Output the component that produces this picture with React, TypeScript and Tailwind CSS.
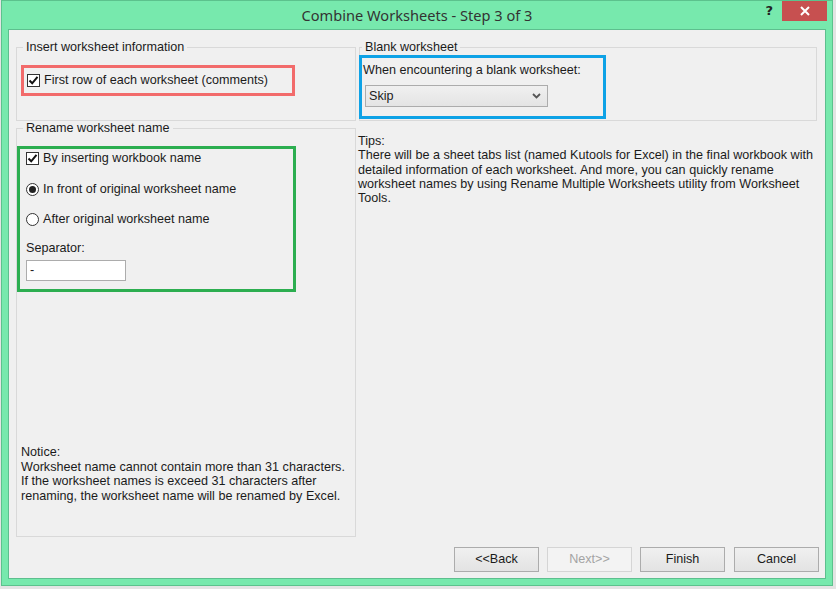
import React from "react";

const ui = "font-['Liberation_Sans',Arial,sans-serif] text-[12.6px] leading-[15px] text-[#1b1b1b]";

function CheckBox({ checked }: { checked?: boolean }) {
  return (
    <span className="flex h-[13px] w-[13px] shrink-0 items-center justify-center border border-[#333] bg-white">
      {checked && (
        <svg width="11" height="11" viewBox="0 0 11 11">
          <path d="M1.5 5.5 L4.2 8.3 L9.5 1.8" fill="none" stroke="#111" strokeWidth="2" />
        </svg>
      )}
    </span>
  );
}

function Radio({ checked }: { checked?: boolean }) {
  return (
    <span className="flex h-[13px] w-[13px] shrink-0 items-center justify-center rounded-full border border-[#333] bg-white">
      {checked && <span className="h-[7px] w-[7px] rounded-full bg-[#222]" />}
    </span>
  );
}

function GroupBox({
  title,
  className,
  legendClass,
  children,
}: {
  title: string;
  className?: string;
  legendClass?: string;
  children?: React.ReactNode;
}) {
  return (
    <fieldset className={`border border-[#d9d9d9] ${className ?? ""}`}>
      <legend className={`px-[3px] ${legendClass ?? "ml-[6px]"}`}>{title}</legend>
      {children}
    </fieldset>
  );
}

function DlgButton({ label, disabled }: { label: string; disabled?: boolean }) {
  return (
    <button
      type="button"
      className={`flex h-[25px] w-[85px] items-center justify-center border ${
        disabled
          ? "border-[#d5d5d5] bg-[#f3f3f3] text-[#a3a3a3]"
          : "border-[#acacac] bg-gradient-to-b from-[#f0f0f0] to-[#e3e3e3] text-[#1b1b1b]"
      }`}
    >
      {label}
    </button>
  );
}

export default function App() {
  return (
    <div className="h-[589px] w-[836px] overflow-hidden bg-[#e4e4e4]">
      <div className="ml-[1px] flex h-[586px] w-[832px] flex-col border border-[#5cc28d] bg-[#77e9ad]">
        {/* title bar */}
        <div className="grid h-[28px] grid-cols-[1fr_auto_1fr]">
          <div />
          <div className="pt-[4px] font-['Noto_Sans',sans-serif] text-[14.6px] leading-[20px] text-[#333]">
            Combine Worksheets - Step 3 of 3
          </div>
          <div className="flex items-start justify-end">
            <span className="mr-[9px] mt-[2px] font-['DejaVu_Sans',sans-serif] text-[13px] font-bold leading-[16px] text-[#222]">
              ?
            </span>
            <button
              type="button"
              className="mr-[5px] flex h-[20px] w-[45px] items-center justify-center bg-[#c75050]"
            >
              <svg width="10" height="10" viewBox="0 0 10 10">
                <path d="M1 1 L9 9 M9 1 L1 9" stroke="#fff" strokeWidth="2" />
              </svg>
            </button>
          </div>
        </div>

        {/* client area */}
        <div className={`mx-[6px] mb-[6px] flex flex-1 flex-col border border-[#5dbf8e] bg-[#f0f0f0] pl-[7px] pt-[10px] ${ui}`}>
          <div className="flex">
            <GroupBox title="Insert worksheet information" className="h-[81px] w-[340px]">
              <div className="ml-[4px] mt-[10px] flex h-[31px] w-[274px] items-center gap-[4px] border-[3px] border-[#f26b6b] pl-[3px]">
                <CheckBox checked />
                <span>First row of each worksheet (comments)</span>
              </div>
            </GroupBox>
            <GroupBox
              title="Blank worksheet"
              className="ml-[3px] h-[81px] w-[458px]"
              legendClass="ml-[2px]"
            >
              <div className="-ml-[1px] h-[64px] w-[247px] border-[3px] border-[#0ea2e6] pl-[1px] pt-[5px]">
                <div>When encountering a blank worksheet:</div>
                <div className="ml-[2px] mt-[7px] flex h-[22px] w-[183px] items-center justify-between border border-[#acacac] bg-gradient-to-b from-[#f0f0f0] to-[#e4e4e4] pl-[3px] pr-[6px]">
                  <span>Skip</span>
                  <svg width="9" height="6" viewBox="0 0 9 6">
                    <path d="M1 1 L4.5 4.5 L8 1" fill="none" stroke="#555" strokeWidth="1.8" />
                  </svg>
                </div>
              </div>
            </GroupBox>
          </div>

          <div className="flex">
            <GroupBox title="Rename worksheet name" className="flex h-[416px] w-[340px] flex-col">
              <div className="mt-[10px] h-[146px] w-[279px] border-[3px] border-[#2cae50] pl-[6px]">
                <div className="flex h-[18px] items-center gap-[4px]">
                  <CheckBox checked />
                  <span>By inserting workbook name</span>
                </div>
                <div className="mt-[13px] flex h-[18px] items-center gap-[4px]">
                  <Radio checked />
                  <span>In front of original worksheet name</span>
                </div>
                <div className="mt-[12px] flex h-[18px] items-center gap-[4px]">
                  <Radio />
                  <span>After original worksheet name</span>
                </div>
                <div className="mt-[11px] flex h-[18px] items-center">Separator:</div>
                <div className="mt-[3px] flex h-[21px] w-[100px] items-center border border-[#acacac] bg-white pl-[3px]">
                  -
                </div>
              </div>
              <div className="mt-auto whitespace-nowrap pb-[33px] pl-[4px] leading-[14.5px]">
                Notice:
                <br />
                Worksheet name cannot contain more than 31 characters.
                <br />
                If the worksheet names is exceed 31 characters after
                <br />
                renaming, the worksheet name will be renamed by Excel.
              </div>
            </GroupBox>
            <div className="ml-[2px] whitespace-nowrap pt-[13px] leading-[14.3px]">
              Tips:
              <br />
              There will be a sheet tabs list (named Kutools for Excel) in the final workbook with
              <br />
              detailed information of each worksheet. And more, you can quickly rename
              <br />
              worksheet names by using Rename Multiple Worksheets utility from Worksheet
              <br />
              Tools.
            </div>
          </div>

          <div className="mt-[10px] flex justify-end gap-[8px] pr-[6px]">
            <DlgButton label="<<Back" />
            <DlgButton label="Next>>" disabled />
            <DlgButton label="Finish" />
            <div className="ml-[1px]">
              <DlgButton label="Cancel" />
            </div>
          </div>
        </div>
      </div>
    </div>
  );
}
